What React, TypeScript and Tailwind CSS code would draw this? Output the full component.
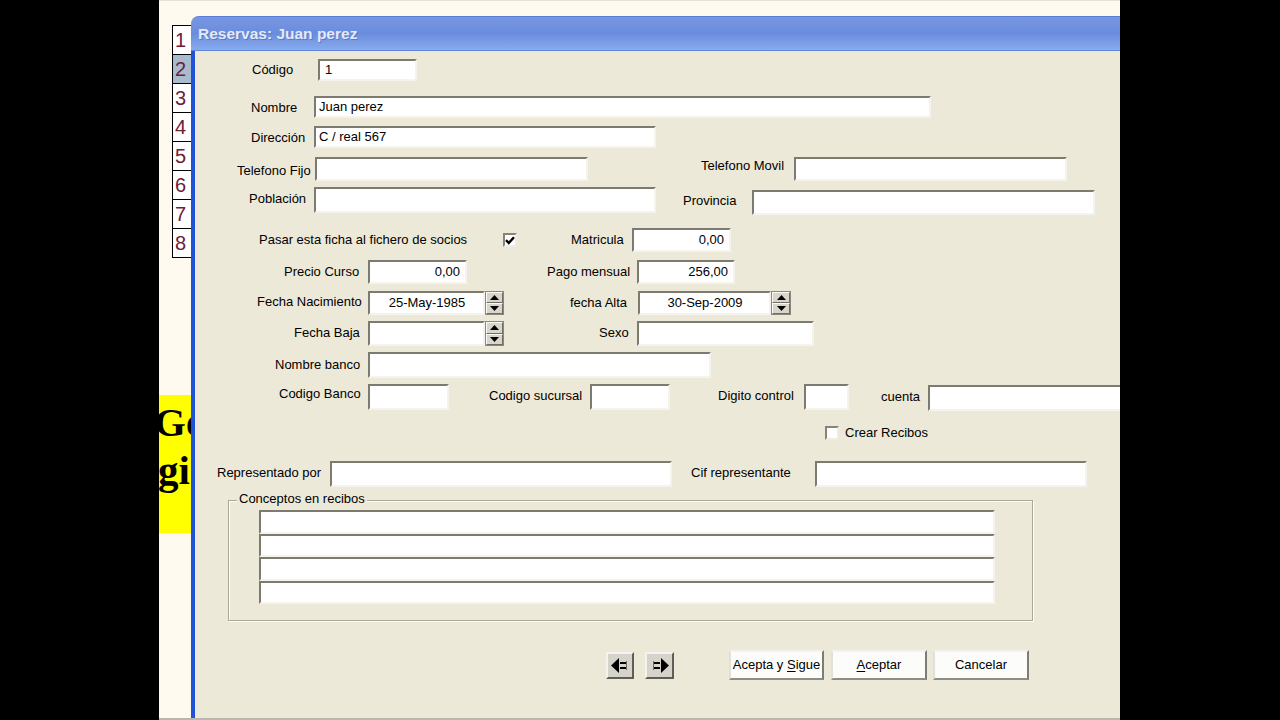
import React from "react";

const sans = "font-['Liberation_Sans',Arial,sans-serif]";

function Field({
  className = "",
  value = "",
  align = "left",
}: {
  className?: string;
  value?: string;
  align?: "left" | "right" | "center";
}) {
  const pos =
    align === "right"
      ? "justify-end pr-[5px]"
      : align === "center"
      ? "justify-center pl-[1px]"
      : "justify-start pl-[3px]";
  return (
    <div
      className={`shrink-0 flex items-center bg-white border-2 border-t-[#7d7b70] border-l-[#7d7b70] border-r-[#f5f3ec] border-b-[#f5f3ec] pb-[2px] text-[13px] leading-none text-black whitespace-nowrap overflow-hidden ${pos} ${className}`}
    >
      {value}
    </div>
  );
}

function Label({ className = "", children }: { className?: string; children: React.ReactNode }) {
  return (
    <span className={`shrink-0 pb-[2px] text-[13px] leading-[15px] text-black whitespace-nowrap ${className}`}>
      {children}
    </span>
  );
}

function SpinHalf({ up }: { up?: boolean }) {
  return (
    <div className="flex-1 flex items-center justify-center bg-[#d8d5cb] border border-t-[#fbfaf6] border-l-[#fbfaf6] border-r-[#6f6d66] border-b-[#6f6d66]">
      <svg width="9" height="5" viewBox="0 0 9 5">
        {up ? <polygon points="0,5 9,5 4.5,0" fill="#000" /> : <polygon points="0,0 9,0 4.5,5" fill="#000" />}
      </svg>
    </div>
  );
}

function Spin({ className = "" }: { className?: string }) {
  return (
    <div className={`shrink-0 flex flex-col border border-[#8a887e] ${className}`}>
      <SpinHalf up />
      <SpinHalf />
    </div>
  );
}

function Check({ checked, className = "" }: { checked?: boolean; className?: string }) {
  return (
    <div
      className={`shrink-0 w-[14px] h-[14px] flex items-center justify-center bg-white border-2 border-t-[#85837a] border-l-[#85837a] border-r-[#eeece4] border-b-[#eeece4] ${className}`}
    >
      {checked && (
        <svg width="10" height="9" viewBox="0 0 10 9">
          <path d="M1 4.2 L3.8 7 L9 1.2" stroke="#000" strokeWidth="2.4" fill="none" />
        </svg>
      )}
    </div>
  );
}

function Btn({ className = "", children }: { className?: string; children: React.ReactNode }) {
  return (
    <div
      className={`shrink-0 flex items-center justify-center pb-[1px] bg-[#fcfcfa] border-2 border-t-[#f3f2ec] border-l-[#e2e0d8] border-r-[#7e7c73] border-b-[#8e8c83] text-[13px] leading-none text-black whitespace-nowrap ${className}`}
    >
      {children}
    </div>
  );
}

function ArrowBtn({ dir, className = "" }: { dir: "left" | "right"; className?: string }) {
  return (
    <div
      className={`shrink-0 flex items-center justify-center bg-[#d6d3ca] border-2 border-t-[#f4f3ee] border-l-[#f4f3ee] border-r-[#5f5d57] border-b-[#5f5d57] ${className}`}
    >
      <svg width="18" height="15" viewBox="0 0 18 15">
        {dir === "left" ? (
          <g fill="#000">
            <polygon points="0,7.5 8,0 8,15" />
            <rect x="9" y="4" width="6" height="2" />
            <rect x="9" y="9" width="6" height="2" />
            <rect x="15" y="3" width="1" height="9" fill="#6b6962" />
          </g>
        ) : (
          <g fill="#000">
            <rect x="2" y="3" width="1" height="9" fill="#6b6962" />
            <rect x="3" y="4" width="6" height="2" />
            <rect x="3" y="9" width="6" height="2" />
            <polygon points="18,7.5 10,0 10,15" />
          </g>
        )}
      </svg>
    </div>
  );
}

const listRows = [
  { n: "1", t: "s" },
  { n: "2", t: "" },
  { n: "3", t: "l" },
  { n: "4", t: "g" },
  { n: "5", t: "T" },
  { n: "6", t: "l" },
  { n: "7", t: "(" },
  { n: "8", t: "l" },
];

export default function App() {
  return (
    <div className={`w-[1280px] h-[720px] flex bg-black overflow-hidden ${sans}`}>
      <div className="w-[159px] shrink-0 bg-black" />

      <div className="relative w-[961px] h-[720px] shrink-0 overflow-hidden bg-[#fffaf0] border-t border-[#e4e1d8]">
        {/* background window */}
        <div className="pt-[24px] pl-[13px]">
          <div className="w-[60px] border-b border-black">
            {listRows.map((r, i) => (
              <div
                key={r.n}
                className={`h-[29px] flex items-center gap-[5px] border-l border-t border-black pl-[2px] text-[20px] leading-none text-[#6d2036] ${
                  i === 1 ? "bg-[#a9bccf]" : "bg-white"
                }`}
              >
                <span>{r.n}</span>
                <span>{r.t}</span>
              </div>
            ))}
          </div>
        </div>
        <div className="mt-[137px] w-[60px] h-[138px] bg-[#ffff00] overflow-hidden pt-[3px] font-['Liberation_Serif',serif] font-bold text-[41px] leading-[48px] text-black">
          <div className="-ml-[5px]">Ge</div>
          <div className="-ml-[1px]">gi</div>
        </div>

        {/* dialog */}
        <div className="absolute left-[32px] top-[15px] w-[980px] bottom-0 flex flex-col">
          <div className="h-[35px] shrink-0 rounded-tl-[8px] border-t border-[#5b7fd6] border-b border-b-[#6486d8] bg-linear-to-b from-[#7897e2] via-[#6b8cdc] to-[#87abee] flex items-center pl-[7px]">
            <span className="text-[15.5px] font-bold text-[#e3eafa] [text-shadow:1px_1px_0_#5a78c8]">
              Reservas: Juan perez
            </span>
          </div>

          <div className="flex-1 bg-[#ece9d8] border-l-4 border-[#1f52d9] flex flex-col">
            {/* Código */}
            <div className="flex items-center h-[22px] mt-[8px]">
              <Label className="ml-[57px] w-[66px]">Código</Label>
              <Field className="w-[99px] h-[22px] pl-[5px]" value="1" />
            </div>

            {/* Nombre */}
            <div className="flex items-center h-[22px] mt-[15px]">
              <Label className="ml-[56px] w-[63px] mt-[3px]">Nombre</Label>
              <Field className="w-[617px] h-[22px]" value="Juan perez" />
            </div>

            {/* Dirección */}
            <div className="flex items-center h-[22px] mt-[8px]">
              <Label className="ml-[56px] w-[63px] mt-[2px]">Dirección</Label>
              <Field className="w-[342px] h-[22px]" value="C / real 567" />
            </div>

            {/* Telefonos */}
            <div className="flex items-center h-[24px] mt-[9px]">
              <Label className="ml-[42px] w-[78px] mt-[4px]">Telefono Fijo</Label>
              <Field className="w-[273px] h-[24px]" />
              <Label className="ml-[113px] w-[93px] mb-[6px]">Telefono Movil</Label>
              <Field className="w-[273px] h-[24px]" />
            </div>

            {/* Población / Provincia */}
            <div className="flex items-center h-[28px] mt-[6px]">
              <Label className="ml-[54px] w-[65px] mb-[4px]">Población</Label>
              <Field className="w-[342px] h-[26px] mb-[2px]" />
              <Label className="ml-[27px] w-[69px]">Provincia</Label>
              <Field className="w-[343px] h-[25px] mt-[2px]" />
            </div>

            {/* Pasar ficha / Matricula */}
            <div className="flex items-center h-[24px] mt-[13px]">
              <Label className="ml-[64px] w-[244px] mt-[1px]">Pasar esta ficha al fichero de socios</Label>
              <Check checked />
              <Label className="ml-[54px] w-[61px]">Matricula</Label>
              <Field className="w-[99px] h-[24px]" value="0,00" align="right" />
            </div>

            {/* Precio / Pago */}
            <div className="flex items-center h-[24px] mt-[8px]">
              <Label className="ml-[89px] w-[84px]">Precio Curso</Label>
              <Field className="w-[99px] h-[24px]" value="0,00" align="right" />
              <Label className="ml-[80px] w-[90px]">Pago mensual</Label>
              <Field className="w-[98px] h-[24px]" value="256,00" align="right" />
            </div>

            {/* Fecha Nacimiento / fecha Alta */}
            <div className="flex items-center h-[24px] mt-[7px]">
              <Label className="ml-[62px] w-[111px] mb-[2px]">Fecha Nacimiento</Label>
              <Field className="w-[117px] h-[24px]" value="25-May-1985" align="center" />
              <Spin className="w-[19px] h-[24px]" />
              <Label className="ml-[66px] w-[68px]">fecha Alta</Label>
              <Field className="w-[133px] h-[24px]" value="30-Sep-2009" align="center" />
              <Spin className="w-[20px] h-[24px]" />
            </div>

            {/* Fecha Baja / Sexo */}
            <div className="flex items-center h-[25px] mt-[6px]">
              <Label className="ml-[99px] w-[74px]">Fecha Baja</Label>
              <Field className="w-[117px] h-[25px]" />
              <Spin className="w-[19px] h-[25px]" />
              <Label className="ml-[95px] w-[38px]">Sexo</Label>
              <Field className="w-[177px] h-[25px]" />
            </div>

            {/* Nombre banco */}
            <div className="flex items-center h-[26px] mt-[6px]">
              <Label className="ml-[80px] w-[93px]">Nombre banco</Label>
              <Field className="w-[343px] h-[26px]" />
            </div>

            {/* Cuenta bancaria */}
            <div className="flex items-center h-[28px] mt-[5px]">
              <Label className="ml-[84px] w-[89px] mb-[5px]">Codigo Banco</Label>
              <Field className="w-[81px] h-[26px]" />
              <Label className="ml-[40px] w-[101px] mb-[1px]">Codigo sucursal</Label>
              <Field className="w-[80px] h-[26px]" />
              <Label className="ml-[48px] w-[86px] mb-[2px]">Digito control</Label>
              <Field className="w-[45px] h-[26px]" />
              <Label className="ml-[32px] w-[47px]">cuenta</Label>
              <Field className="w-[210px] h-[26px] mt-[2px]" />
            </div>

            {/* Crear Recibos */}
            <div className="flex items-center h-[14px] mt-[15px]">
              <Check className="ml-[630px] w-[13px] h-[13px]" />
              <Label className="ml-[6px]">Crear Recibos</Label>
            </div>

            {/* Representado */}
            <div className="flex items-center h-[27px] mt-[20px]">
              <Label className="ml-[22px] w-[113px] mb-[1px]">Representado por</Label>
              <Field className="w-[342px] h-[26px]" />
              <Label className="ml-[19px] w-[124px] mb-[1px]">Cif representante</Label>
              <Field className="w-[272px] h-[26px]" />
            </div>

            {/* Conceptos en recibos */}
            <div className="relative ml-[33px] mt-[13px] w-[805px] h-[121px] border border-[#aaa798] shadow-[1px_1px_0_#ffffff,inset_1px_1px_0_#ffffff] pt-[9px] pl-[30px]">
              <span className="absolute left-[8px] -top-[10px] px-[2px] bg-[#ece9d8] text-[13px] leading-[16px] text-black">
                Conceptos en recibos
              </span>
              <div className="flex flex-col">
                <Field className="w-[736px] h-[24px]" />
                <Field className="w-[736px] h-[23px]" />
                <Field className="w-[736px] h-[24px]" />
                <Field className="w-[736px] h-[23px]" />
              </div>
            </div>

            {/* Botones */}
            <div className="flex items-center h-[30px] mt-[29px]">
              <ArrowBtn dir="left" className="ml-[411px] w-[28px] h-[27px]" />
              <ArrowBtn dir="right" className="ml-[11px] w-[29px] h-[27px]" />
              <Btn className="ml-[55px] w-[95px] h-[30px]">
                <span>
                  Acepta y <span className="underline underline-offset-2">S</span>igue
                </span>
              </Btn>
              <Btn className="ml-[7px] w-[96px] h-[30px]">
                <span>
                  <span className="underline underline-offset-2">A</span>ceptar
                </span>
              </Btn>
              <Btn className="ml-[6px] w-[96px] h-[30px]">Cancelar</Btn>
            </div>
          </div>
        </div>

        <div className="absolute left-0 right-0 bottom-0 h-[2px] bg-[#b9b7ae]" />
      </div>

      <div className="flex-1 bg-black" />
    </div>
  );
}
